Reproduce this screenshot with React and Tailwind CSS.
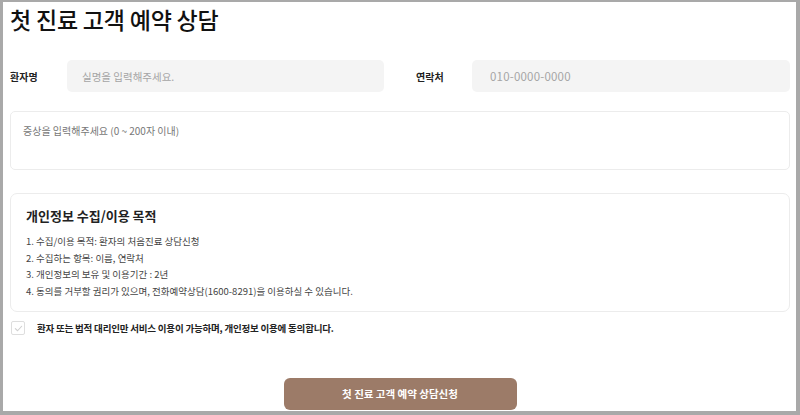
import React, { useState } from 'react';

const font = { fontFamily: '"Noto Sans CJK KR", "Noto Sans", sans-serif' };

const terms = [
  '1. 수집/이용 목적: 환자의 처음진료 상담신청',
  '2. 수집하는 항목: 이름, 연락처',
  '3. 개인정보의 보유 및 이용기간 : 2년',
  '4. 동의를 거부할 권리가 있으며, 전화예약상담(1600-8291)을 이용하실 수 있습니다.',
];

const App = () => {
  const [agree, setAgree] = useState(false);

  return (
    <div
      className="w-[800px] h-[415px] bg-white border-l-[3px] border-t-[2px] border-r-[4px] border-b-[4px] border-[#a9a9a9] overflow-hidden"
      style={font}
    >
      <div className="pl-[7px] pr-[6px] pt-[2px]">
        <h1 className="text-[23px] leading-[30px] font-medium text-[#111] tracking-[-0.2px]">첫 진료 고객 예약 상담</h1>

        {/* name / phone */}
        <div className="mt-[26px] flex items-center">
          <label className="w-[57px] text-[10px] font-bold text-[#222]">환자명</label>
          <input
            placeholder="실명을 입력해주세요."
            className="w-[317px] h-[32px] rounded-[5px] bg-[#f4f4f4] px-[15px] text-[10.5px] text-[#333] placeholder:text-[#a5a5a5] outline-none"
          />
          <label className="ml-[32px] w-[56px] text-[10px] font-bold text-[#222]">연락처</label>
          <input
            placeholder="010-0000-0000"
            className="flex-1 h-[32px] rounded-[5px] bg-[#f4f4f4] px-[18px] text-[11.5px] tracking-[0.2px] text-[#333] placeholder:text-[#a5a5a5] outline-none"
          />
        </div>

        <textarea
          placeholder="증상을 입력해주세요 (0 ~ 200자 이내)"
          className="mt-[19px] block w-full h-[59px] resize-none rounded-[5px] border border-[#ececec] px-[12px] py-[12px] text-[10px] leading-[14px] text-[#333] placeholder:text-[#777] outline-none"
        />

        {/* privacy */}
        <div className="mt-[23px] h-[119px] rounded-[7px] border border-[#ececec] pl-[15px] pt-[13px]">
          <h2 className="text-[13px] leading-[18px] font-bold text-[#222]">개인정보 수집/이용 목적</h2>
          <ul className="mt-[8px] text-[9.5px] leading-[16.5px] text-[#444]">
            {terms.map((t) => (
              <li key={t}>{t}</li>
            ))}
          </ul>
        </div>

        <label className="mt-[9px] flex items-center cursor-pointer">
          <span
            onClick={() => setAgree(!agree)}
            className="ml-[1px] w-[14px] h-[14px] rounded-[2px] border border-[#dedede] flex items-center justify-center"
          >
            <svg width="9" height="9" viewBox="0 0 10 10" fill="none">
              <path d="M1.5 5.2 L4 7.5 L8.5 2.5" stroke={agree ? '#9c7b68' : '#cfcfcf'} strokeWidth="1.2" strokeLinecap="round" strokeLinejoin="round" />
            </svg>
          </span>
          <span className="ml-[12px] text-[9.5px] leading-[14px] font-bold tracking-[-0.2px] text-[#222]">
            환자 또는 법적 대리인만 서비스 이용이 가능하며, 개인정보 이용에 동의합니다.
          </span>
        </label>

        <div className="mt-[43px] flex justify-center">
          <button className="w-[233px] h-[32px] rounded-[6px] bg-[#9c7b68] text-white text-[10.5px] font-bold">
            첫 진료 고객 예약 상담신청
          </button>
        </div>
      </div>
    </div>
  );
};

export default App;
